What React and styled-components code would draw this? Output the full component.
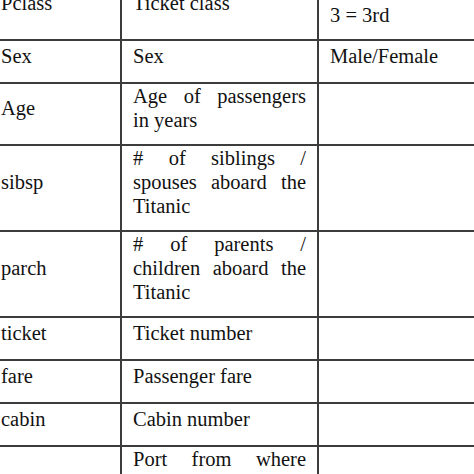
import React from "react";
import styled, { createGlobalStyle } from "styled-components";

const Global = createGlobalStyle`
  html, body {
    margin: 0;
    padding: 0;
    background: #ffffff;
    overflow: hidden;
  }
  body {
    width: 474px;
    height: 474px;
  }
`;

const Page = styled.div`
  width: 474px;
  height: 474px;
  overflow: hidden;
  background: #ffffff;
`;

const Table = styled.div`
  display: grid;
  grid-template-columns: 130px 195px 200px;
  grid-auto-rows: minmax(41px, auto);
  gap: 2px;
  padding: 2px;
  background: #3c3c3c;
  margin: -23px 0 0 -12px;
  width: max-content;
  font-family: "Liberation Serif", "Times New Roman", serif;
  font-size: 20.5px;
  line-height: 24px;
  color: #121212;
`;

const Cell = styled.div`
  background: #ffffff;
  display: flex;
  flex-direction: column;
  justify-content: center;
  padding: 0 11px 12px 11px;
`;

const Line = styled.span`
  display: block;
  text-align: ${(p) => (p.$justify ? "justify" : "left")};
  text-align-last: ${(p) => (p.$justify ? "justify" : "left")};
  white-space: ${(p) => (p.$justify ? "normal" : "nowrap")};
`;

const rows = [
  { name: ["Pclass"], desc: ["Ticket class"], key: ["1 = 1st 2 = 2nd", "3 = 3rd"] },
  { name: ["Sex"], desc: ["Sex"], key: ["Male/Female"] },
  { name: ["Age"], desc: ["Age of passengers", "in years"], key: [] },
  { name: ["sibsp"], desc: ["# of siblings /", "spouses aboard the", "Titanic"], key: [] },
  { name: ["parch"], desc: ["# of parents /", "children aboard the", "Titanic"], key: [] },
  { name: ["ticket"], desc: ["Ticket number"], key: [] },
  { name: ["fare"], desc: ["Passenger fare"], key: [] },
  { name: ["cabin"], desc: ["Cabin number"], key: [] },
  { name: ["embarked"], desc: ["Port from where", "the passenger", "embarked"], key: [] },
];

function CellText({ lines }) {
  return (
    <Cell>
      {lines.map((l, i) => (
        <Line key={i} $justify={lines.length > 1 && i < lines.length - 1}>
          {l}
        </Line>
      ))}
    </Cell>
  );
}

export default function App() {
  return (
    <Page>
      <Global />
      <Table>
        {rows.map((r, i) => (
          <React.Fragment key={i}>
            <CellText lines={r.name} />
            <CellText lines={r.desc} />
            <CellText lines={r.key} />
          </React.Fragment>
        ))}
      </Table>
    </Page>
  );
}
